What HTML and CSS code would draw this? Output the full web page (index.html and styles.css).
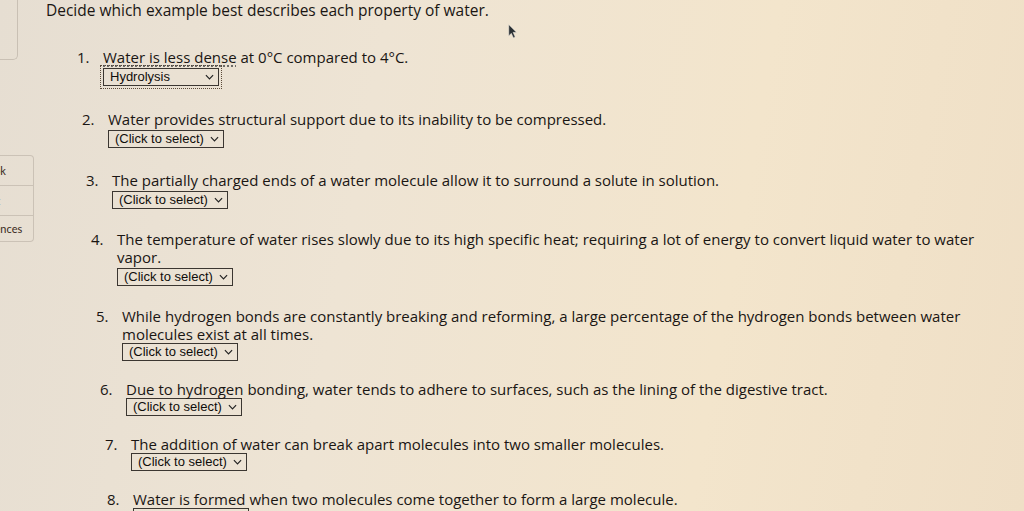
FILE: index.html
```html
<!DOCTYPE html>
<html>
<head>
<meta charset="utf-8">
<link rel="stylesheet" href="styles.css">
</head>
<body>
<div class="page">
  <aside class="sidebar">
    <div class="side-top"></div>
    <div class="side-menu">
      <div class="side-row"><span class="side-label lab-ebook">eBook</span></div>
      <div class="side-row"><span class="side-label lab-print">Print</span></div>
      <div class="side-row"><span class="side-label lab-ref">References</span></div>
    </div>
  </aside>
  <main class="main">
    <h1 class="title">Decide which example best describes each property of water.</h1>
    <ol class="items">
      <li class="item i1">
        <span class="num">1.</span>
        <div class="body">
          <p class="q"><span class="dotted">Water is less dense</span> at 0°C compared to 4°C.</p>
          <div class="focus"><div class="select">Hydrolysis<svg class="chev" viewBox="0 0 10 6"><polyline points="1,1 5,5 9,1"/></svg></div></div>
        </div>
      </li>
      <li class="item i2">
        <span class="num">2.</span>
        <div class="body">
          <p class="q">Water provides structural support due to its inability to be compressed.</p>
          <div class="select">(Click to select)<svg class="chev" viewBox="0 0 10 6"><polyline points="1,1 5,5 9,1"/></svg></div>
        </div>
      </li>
      <li class="item i3">
        <span class="num">3.</span>
        <div class="body">
          <p class="q">The partially charged ends of a water molecule allow it to surround a solute in solution.</p>
          <div class="select">(Click to select)<svg class="chev" viewBox="0 0 10 6"><polyline points="1,1 5,5 9,1"/></svg></div>
        </div>
      </li>
      <li class="item i4">
        <span class="num">4.</span>
        <div class="body">
          <p class="q">The temperature of water rises slowly due to its high specific heat; requiring a lot of energy to convert liquid water to water vapor.</p>
          <div class="select">(Click to select)<svg class="chev" viewBox="0 0 10 6"><polyline points="1,1 5,5 9,1"/></svg></div>
        </div>
      </li>
      <li class="item i5">
        <span class="num">5.</span>
        <div class="body">
          <p class="q">While hydrogen bonds are constantly breaking and reforming, a large percentage of the hydrogen bonds between water molecules exist at all times.</p>
          <div class="select">(Click to select)<svg class="chev" viewBox="0 0 10 6"><polyline points="1,1 5,5 9,1"/></svg></div>
        </div>
      </li>
      <li class="item i6">
        <span class="num">6.</span>
        <div class="body">
          <p class="q">Due to hydrogen bonding, water tends to adhere to surfaces, such as the lining of the digestive tract.</p>
          <div class="select">(Click to select)<svg class="chev" viewBox="0 0 10 6"><polyline points="1,1 5,5 9,1"/></svg></div>
        </div>
      </li>
      <li class="item i7">
        <span class="num">7.</span>
        <div class="body">
          <p class="q">The addition of water can break apart molecules into two smaller molecules.</p>
          <div class="select">(Click to select)<svg class="chev" viewBox="0 0 10 6"><polyline points="1,1 5,5 9,1"/></svg></div>
        </div>
      </li>
      <li class="item i8">
        <span class="num">8.</span>
        <div class="body">
          <p class="q">Water is formed when two molecules come together to form a large molecule.</p>
          <div class="select">(Click to select)<svg class="chev" viewBox="0 0 10 6"><polyline points="1,1 5,5 9,1"/></svg></div>
        </div>
      </li>
    </ol>
  </main>
  <svg class="cursor" viewBox="0 0 12 18"><path d="M1 1 L1 14 L4 11 L6.5 16.5 L8.5 15.5 L6 10 L10 10 Z"/></svg>
</div>
</body>
</html>
```
FILE: styles.css
```css
* { box-sizing: border-box; }
html, body { margin: 0; padding: 0; }
body {
  width: 1024px;
  height: 511px;
  overflow: hidden;
  background: linear-gradient(100deg, #e6ded2 0%, #eee4d4 35%, #f3e5cc 70%, #efdfc6 100%);
  font-family: "Open Sans", Lato, sans-serif;
  color: #1a1613;
}
.page {
  position: relative;
  display: flex;
  height: 511px;
  overflow: hidden;
}
.sidebar {
  width: 34px;
  flex: none;
  display: flex;
  flex-direction: column;
}
.side-top {
  width: 18px;
  height: 60px;
  border-right: 1px solid #c9c0b4;
  border-bottom: 1px solid #c9c0b4;
  border-bottom-right-radius: 5px;
}
.side-menu {
  margin-top: 95px;
  width: 34px;
  border: 1px solid #cbc2b6;
  border-left: none;
  border-radius: 0 4px 4px 0;
}
.side-row {
  height: 30px;
  display: flex;
  align-items: center;
  font-family: Lato, sans-serif;
  font-size: 11px;
  color: #3a2a20;
  border-bottom: 1px solid #cbc2b6;
  overflow: hidden;
  white-space: nowrap;
}
.side-row:last-child { border-bottom: none; height: 25px; }
.side-label { flex: none; }
.lab-ebook { margin-left: -25px; }
.lab-print { margin-left: -23px; }
.lab-ref { margin-left: -31px; }
.main {
  flex: 1;
  padding-left: 12px;
  padding-right: 29px;
}
.title {
  margin: 0;
  padding-top: 1px;
  font-size: 15.5px;
  font-weight: 400;
  line-height: 18px;
}
.items {
  list-style: none;
  margin: 0;
  padding: 0;
  padding-top: 29px;
}
.item {
  display: flex;
  font-size: 15px;
  line-height: 18px;
}
.num { width: 26px; flex: none; }
.body { flex: 1; }
.q { margin: 0 0 2px 0; }
.dotted {
  text-decoration: underline dotted #444;
  text-underline-offset: 3px;
}
.i1 { margin-left: 31px; margin-bottom: 24px; }
.i2 { margin-left: 36px; margin-bottom: 23px; }
.i3 { margin-left: 40px; margin-bottom: 21px; }
.i4 { margin-left: 45px; margin-bottom: 21px; }
.i5 { margin-left: 50px; margin-bottom: 19px; }
.i6 { margin-left: 54px; margin-bottom: 19px; }
.i7 { margin-left: 59px; margin-bottom: 19px; }
.i8 { margin-left: 61px; }
.i5 .q, .i6 .q, .i7 .q, .i8 .q { margin-bottom: 0; }
.select {
  display: flex;
  align-items: center;
  justify-content: space-between;
  width: 116px;
  height: 18px;
  padding: 0 4px 0 6px;
  border: 1px solid #3b3631;
  font-family: "Liberation Sans", Arial, sans-serif;
  font-size: 13px;
  line-height: 16px;
  color: #0f0d0b;
  background: transparent;
}
.focus {
  width: 122px;
  padding: 2px;
  margin: -3px 0 -3px -3px;
  border: 1px dotted #5a4a3a;
}
.chev {
  width: 9px;
  height: 6px;
  flex: none;
  fill: none;
  stroke: #222;
  stroke-width: 1.3;
}
.cursor {
  position: absolute;
  left: 508px;
  top: 24px;
  width: 10px;
  height: 15px;
  fill: #2b3033;
  stroke: #ddd;
  stroke-width: 0.5;
}
```
